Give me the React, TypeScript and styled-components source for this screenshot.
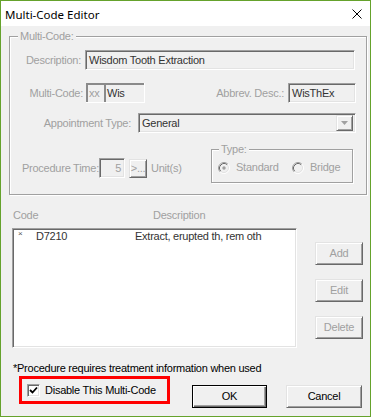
import React from "react";
import styled, { createGlobalStyle } from "styled-components";

const Global = createGlobalStyle`
  * { box-sizing: border-box; }
  html, body { margin: 0; padding: 0; background: #ffffff; }
  body { font-family: "Liberation Sans", Arial, sans-serif; font-size: 11px; line-height: 13px; letter-spacing: -0.25px; }
`;

const DIS = "#a0a0a0";

const Window = styled.div`
  width: 371px;
  height: 417px;
  border: 1px solid #65a22c;
  background: #f0f0f0;
  display: flex;
  flex-direction: column;
`;

const TitleBar = styled.div`
  height: 25px;
  background: #ffffff;
  display: flex;
  align-items: center;
  justify-content: space-between;
  padding: 0 8px 0 4px;
  flex-shrink: 0;
`;

const Title = styled.span`
  font-family: "Noto Sans", "Open Sans", sans-serif;
  font-size: 11.5px;
  letter-spacing: 0;
  color: #000;
  margin-top: 1px;
`;

const Body = styled.div`
  display: flex;
  flex-direction: column;
  padding: 10px 0 0 8px;
`;

const GroupBox = styled.div<{ $w: number; $h: number }>`
  position: relative;
  width: ${(p) => p.$w}px;
  height: ${(p) => p.$h}px;
  border: 1px solid #a0a0a0;
  box-shadow: 1px 1px 0 #ffffff, inset 1px 1px 0 #ffffff;
  display: flex;
  flex-direction: column;
`;

const Caption = styled.span<{ $left: number }>`
  position: absolute;
  top: -7px;
  left: ${(p) => p.$left}px;
  padding: 0 2px;
  background: #f0f0f0;
  color: ${DIS};
  line-height: 13px;
`;

const Row = styled.div<{ $mt: number; $h?: number }>`
  display: flex;
  align-items: center;
  margin-top: ${(p) => p.$mt}px;
  height: ${(p) => p.$h ?? 20}px;
`;

const Label = styled.span<{ $w: number; $mr: number; $ml?: number; $align?: string }>`
  width: ${(p) => p.$w}px;
  margin-right: ${(p) => p.$mr}px;
  margin-left: ${(p) => p.$ml ?? 0}px;
  text-align: ${(p) => p.$align ?? "right"};
  color: ${DIS};
  white-space: nowrap;
  flex-shrink: 0;
`;

const Sunken = styled.div<{ $w: number; $h?: number; $bg?: string; $color?: string; $align?: string }>`
  width: ${(p) => p.$w}px;
  height: ${(p) => p.$h ?? 20}px;
  border: 1px solid;
  border-color: #a0a0a0 #ffffff #ffffff #a0a0a0;
  box-shadow: inset 1px 1px 0 #696969, inset -1px -1px 0 #e3e3e3;
  background: ${(p) => p.$bg ?? "#f0f0f0"};
  color: ${(p) => p.$color ?? "#333"};
  display: flex;
  align-items: center;
  justify-content: ${(p) => (p.$align === "right" ? "flex-end" : "flex-start")};
  padding: 0 3px;
  white-space: nowrap;
  flex-shrink: 0;
  overflow: hidden;
`;

const Composite = styled.div`
  display: flex;
  height: 20px;
  border-right: 1px solid #fff;
  border-bottom: 1px solid #fff;
`;

const Inset = styled.div<{ $w: number; $color: string }>`
  width: ${(p) => p.$w}px;
  height: 19px;
  border-top: 2px solid #8a8a8a;
  border-left: 2px solid #8a8a8a;
  color: ${(p) => p.$color};
  display: flex;
  align-items: center;
  padding-left: 1px;
`;

const Combo = styled(Sunken)`
  padding: 0 2px 0 3px;
  justify-content: space-between;
`;

const DropBtn = styled.div`
  width: 17px;
  height: 16px;
  background: #f0f0f0;
  border: 1px solid;
  border-color: #e3e3e3 #696969 #696969 #e3e3e3;
  box-shadow: inset 1px 1px 0 #fff, inset -1px -1px 0 #a0a0a0;
  display: flex;
  align-items: center;
  justify-content: center;
`;

const Button = styled.div<{ $w: number; $h?: number; $mt?: number; $ml?: number; $disabled?: boolean; $default?: boolean }>`
  width: ${(p) => p.$w}px;
  height: ${(p) => p.$h ?? 23}px;
  margin-top: ${(p) => p.$mt ?? 0}px;
  margin-left: ${(p) => p.$ml ?? 0}px;
  flex-shrink: 0;
  background: #f0f0f0;
  border: 1px solid;
  border-color: ${(p) => (p.$default ? "#000 #000 #000 #000" : "#e3e3e3 #696969 #696969 #e3e3e3")};
  box-shadow: ${(p) =>
    p.$default
      ? "inset 1px 1px 0 #fff, inset -1px -1px 0 #696969, inset -2px -2px 0 #a0a0a0"
      : "inset 1px 1px 0 #fff, inset -1px -1px 0 #a0a0a0"};
  color: ${(p) => (p.$disabled ? DIS : "#000")};
  display: flex;
  align-items: center;
  justify-content: center;
  white-space: nowrap;
`;

const ProcPart = styled.div`
  width: 201px;
  display: flex;
  align-items: center;
  padding-left: 12px;
  margin-top: 9px;
  align-self: flex-start;
`;

const TypeItems = styled.div`
  display: flex;
  align-items: center;
  padding: 11px 0 0 6px;
`;

const RadioItem = styled.div<{ $w?: number }>`
  display: flex;
  align-items: center;
  gap: 6px;
  width: ${(p) => (p.$w ? `${p.$w}px` : "auto")};
  color: ${DIS};
`;

const ListHeader = styled.div`
  display: flex;
  margin-top: 14px;
  padding-left: 4px;
  height: 13px;
`;

const ListArea = styled.div`
  display: flex;
  margin-top: 6px;
  padding-left: 3px;
`;

const ListBox = styled.div`
  width: 285px;
  height: 120px;
  background: #ffffff;
  border: 1px solid;
  border-color: #a0a0a0 #ffffff #ffffff #a0a0a0;
  box-shadow: inset 1px 1px 0 #696969, inset -1px -1px 0 #e3e3e3;
  padding: 1px 0 0 2px;
`;

const ListRow = styled.div`
  display: grid;
  grid-template-columns: 18px 99px 1fr;
  padding-left: 3px;
  color: #333;
  line-height: 12px;
`;

const Star = styled.span`
  font-size: 8px;
  line-height: 8px;
  color: #555;
`;

const SideButtons = styled.div`
  display: flex;
  flex-direction: column;
  margin-left: 18px;
  padding-top: 14px;
  gap: 14px;
`;

const Note = styled.div`
  margin-top: 14px;
  padding-left: 4px;
  color: #000;
`;

const BottomRow = styled.div`
  display: flex;
  align-items: flex-start;
  margin-top: 1px;
`;

const Highlight = styled.div`
  width: 151px;
  height: 28px;
  margin-left: 10px;
  border: 3px solid #ff0000;
  display: flex;
  align-items: center;
  padding-left: 5px;
  gap: 5px;
  color: #000;
`;

const CheckBox = styled.div`
  width: 13px;
  height: 13px;
  background: #fff;
  border: 1px solid;
  border-color: #a0a0a0 #ffffff #ffffff #a0a0a0;
  box-shadow: inset 1px 1px 0 #696969, inset -1px -1px 0 #e3e3e3;
  display: flex;
  align-items: center;
  justify-content: center;
`;

const Radio = ({ checked }: { checked?: boolean }) => (
  <svg width="12" height="12" viewBox="0 0 12 12">
    <circle cx="6" cy="6" r="5" fill="#f0f0f0" />
    <path d="M2.11 9.89 A5.5 5.5 0 0 1 9.89 2.11" stroke="#a0a0a0" fill="none" />
    <path d="M9.89 2.11 A5.5 5.5 0 0 1 2.11 9.89" stroke="#ffffff" fill="none" />
    <path d="M2.82 9.18 A4.5 4.5 0 0 1 9.18 2.82" stroke="#696969" fill="none" />
    <path d="M9.18 2.82 A4.5 4.5 0 0 1 2.82 9.18" stroke="#e3e3e3" fill="none" />
    {checked && <circle cx="6" cy="6" r="1.7" fill="#a0a0a0" />}
  </svg>
);

export default function App() {
  return (
    <>
      <Global />
      <Window>
        <TitleBar>
          <Title>Multi-Code Editor</Title>
          <svg width="10" height="10" viewBox="0 0 10 10">
            <path d="M0.5 0.5 L9.5 9.5 M9.5 0.5 L0.5 9.5" stroke="#000" strokeWidth="1" />
          </svg>
        </TitleBar>
        <Body>
          <GroupBox $w={358} $h={159}>
            <Caption $left={8}>Multi-Code:</Caption>
            <Row $mt={13}>
              <Label $w={71} $mr={4}>Description:</Label>
              <Sunken $w={270}>Wisdom Tooth Extraction</Sunken>
            </Row>
            <Row $mt={13}>
              <Label $w={73} $mr={3}>Multi-Code:</Label>
              <Composite>
                <Inset $w={18} $color={DIS}>xx</Inset>
                <Inset $w={40} $color="#333">Wis</Inset>
              </Composite>
              <Label $w={139} $mr={4}>Abbrev. Desc.:</Label>
              <Sunken $w={68}>WisThEx</Sunken>
            </Row>
            <Row $mt={10}>
              <Label $w={121} $mr={7}>Appointment Type:</Label>
              <Combo $w={218}>
                <span>General</span>
                <DropBtn>
                  <svg width="7" height="4" viewBox="0 0 7 4">
                    <polygon points="0,0 7,0 3.5,4" fill="#a0a0a0" />
                  </svg>
                </DropBtn>
              </Combo>
            </Row>
            <Row $mt={16} $h={34}>
              <ProcPart>
                <Label $w={77} $mr={0} $align="left">Procedure Time:</Label>
                <Sunken $w={26} $color={DIS} $align="right">5</Sunken>
                <Button $w={18} $h={19} $ml={4} $disabled>&gt;...</Button>
                <Label $w={40} $mr={0} $ml={4} $align="left">Unit(s)</Label>
              </ProcPart>
              <GroupBox $w={142} $h={34}>
                <Caption $left={7}>Type:</Caption>
                <TypeItems>
                  <RadioItem $w={74}>
                    <Radio checked />
                    <span>Standard</span>
                  </RadioItem>
                  <RadioItem>
                    <Radio />
                    <span>Bridge</span>
                  </RadioItem>
                </TypeItems>
              </GroupBox>
            </Row>
          </GroupBox>

          <ListHeader>
            <Label $w={140} $mr={0} $align="left">Code</Label>
            <Label $w={100} $mr={0} $align="left">Description</Label>
          </ListHeader>
          <ListArea>
            <ListBox>
              <ListRow>
                <Star>×</Star>
                <span>D7210</span>
                <span>Extract, erupted th, rem oth</span>
              </ListRow>
            </ListBox>
            <SideButtons>
              <Button $w={48} $disabled>Add</Button>
              <Button $w={48} $disabled>Edit</Button>
              <Button $w={48} $disabled>Delete</Button>
            </SideButtons>
          </ListArea>

          <Note>*Procedure requires treatment information when used</Note>
          <BottomRow>
            <Highlight>
              <CheckBox>
                <svg width="9" height="9" viewBox="0 0 9 9">
                  <path d="M1 4 L3.5 6.5 L8 1.5" stroke="#000" strokeWidth="1.8" fill="none" />
                </svg>
              </CheckBox>
              <span>Disable This Multi-Code</span>
            </Highlight>
            <Button $w={75} $mt={9} $ml={22} $default>OK</Button>
            <Button $w={76} $mt={9} $ml={19}>Cancel</Button>
          </BottomRow>
        </Body>
      </Window>
    </>
  );
}
